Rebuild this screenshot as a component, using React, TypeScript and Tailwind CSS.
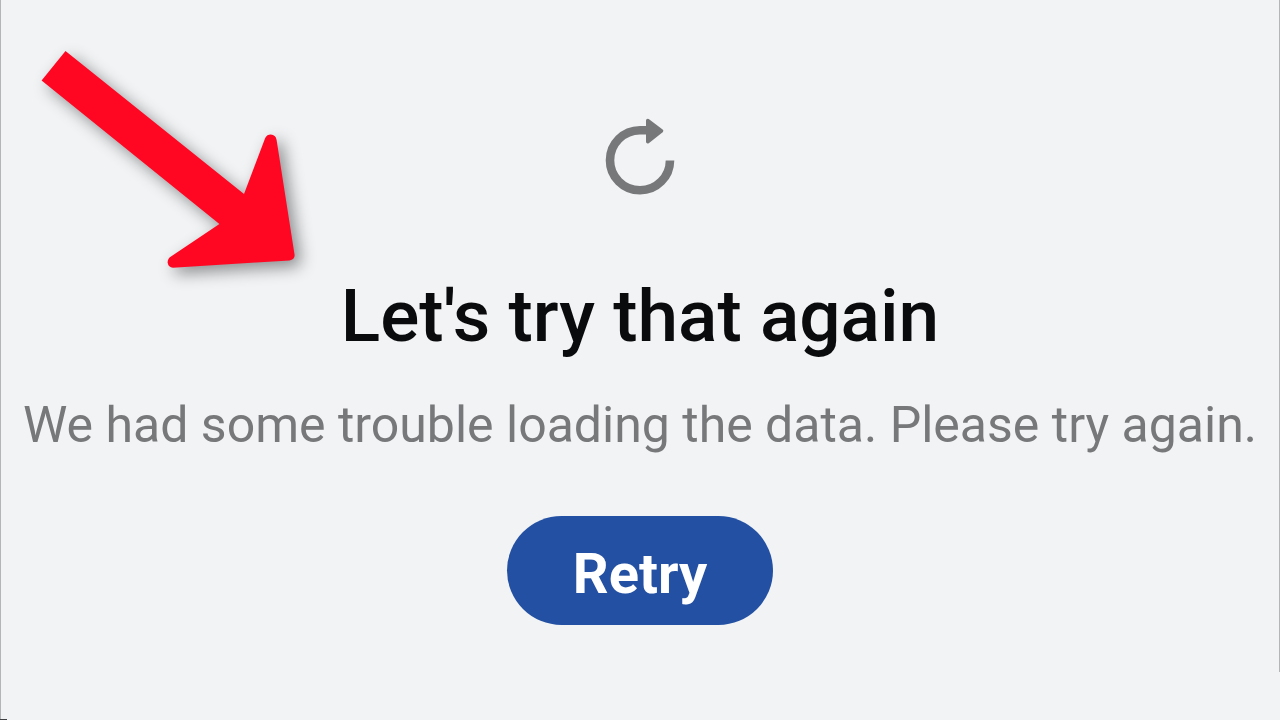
import React from 'react';

const RetryIcon: React.FC = () => {
  return (
    <svg width="72" height="80" viewBox="0 0 72 80" fill="none" aria-hidden="true">
      <path d="M44 14.3 H36 A30 30 0 1 0 66 44.4" stroke="#77787a" strokeWidth="8.6" />
      <path
        d="M43.7 4.4 L57.6 14.9 L43.7 25.8 Z"
        fill="#77787a"
        stroke="#77787a"
        strokeWidth="3.4"
        strokeLinejoin="round"
      />
    </svg>
  );
};

const PointerArrow: React.FC = () => {
  return (
    <svg
      width="340"
      height="310"
      viewBox="0 0 340 310"
      className="absolute left-0 top-0 pointer-events-none"
      aria-hidden="true"
    >
      <defs>
        <filter
          id="arrow-shadow"
          x="-20%"
          y="-20%"
          width="150%"
          height="150%"
          colorInterpolationFilters="sRGB"
        >
          <feDropShadow dx="6" dy="6" stdDeviation="8" floodColor="#000000" floodOpacity="0.42" />
        </filter>
      </defs>
      <path
        filter="url(#arrow-shadow)"
        fill="#ff0723"
        d="M65.5 51 L244 194 L265.2 138 Q267 134.6 270.8 134.6 Q275.6 134.8 276.6 140 L294.6 255 Q294.8 260 289.5 260.4 L173 267.8 Q168.4 267.6 167.6 262.6 Q167.6 258.8 170.6 256.8 L219.4 224 L41.6 80.6 Z"
      />
    </svg>
  );
};

const App: React.FC = () => {
  return (
    <div className="relative min-h-screen bg-[#f1f3f5] font-[Roboto,sans-serif]">
      <main className="flex flex-col items-center pt-[116px] pb-12 text-center">
        <RetryIcon />
        <h1 className="mt-20 text-[73px] leading-[80px] font-medium text-[#0a0b0c]">
          Let's try that again
        </h1>
        <p className="mt-10 text-[50px] leading-[58px] text-[#77787a]">
          We had some trouble loading the data. Please try again.
        </p>
        <button
          type="button"
          className="mt-[62px] px-[66px] pt-[26px] pb-[19px] rounded-full bg-[#2350a2] text-[56px] leading-[64px] font-bold text-white"
        >
          Retry
        </button>
      </main>

      <PointerArrow />

      {/* frame edges */}
      <div className="absolute left-0 top-0 bottom-0 w-px bg-[#b4b5b7]" />
      <div className="absolute right-0 top-0 bottom-12 w-px bg-[#b4b5b7]" />
      <div className="absolute left-0 bottom-0 h-px w-[7px] bg-[#404143]" />
    </div>
  );
};

export default App;
